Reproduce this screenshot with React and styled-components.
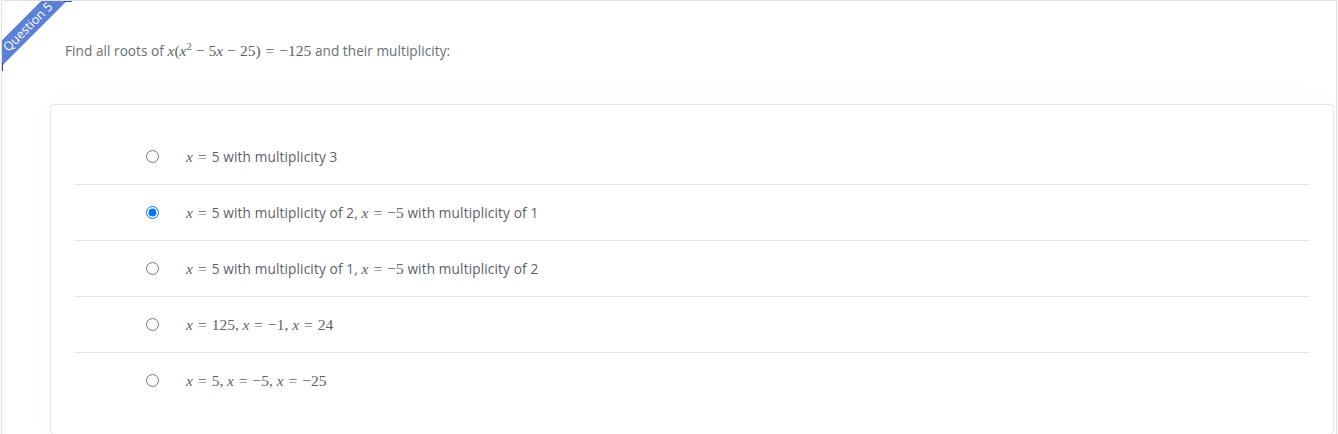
import styled, { createGlobalStyle } from "styled-components"

const GlobalStyle = createGlobalStyle`
  html, body {
    margin: 0;
    padding: 0;
    background: #ffffff;
  }
  body {
    font-family: "Open Sans", "Noto Sans", sans-serif;
  }
`

const StyledCard = styled.div`
  position: relative;
  margin-left: 1px;
  width: 1336px;
  height: 440px;
  box-sizing: border-box;
  border: 1px solid #dfe1e6;
  border-bottom: none;
  padding: 35px 2px 0 48px;
  overflow: hidden;
  background: #ffffff;
`

const StyledRibbon = styled.div`
  position: absolute;
  left: -29px;
  top: 17px;
  width: 110px;
  height: 18px;
  line-height: 18px;
  background: #5b80d6;
  color: #ffffff;
  font-size: 12.5px;
  text-align: center;
  transform: rotate(-45deg);
  z-index: 2;
`

const StyledFold = styled.div`
  position: absolute;
  background: #2e4d9c;
  z-index: 3;
  ${({ $side }) =>
    $side === "left"
      ? "left: -1px; top: 62px; width: 2px; height: 8px;"
      : "left: 62px; top: -1px; width: 8px; height: 2px;"}
`

const StyledQuestion = styled.div`
  padding-left: 15px;
  font-size: 13.6px;
  line-height: 22px;
  color: #6b6e73;
  letter-spacing: 0.05px;
`

const StyledAnswers = styled.div`
  margin-top: 42px;
  border: 1px solid #e3e4e8;
  border-radius: 4px;
  padding: 23px 24px 26px;
  box-shadow: 0 0 40px rgba(0, 0, 0, 0.025);
  background: #ffffff;
`

const StyledRow = styled.label`
  display: flex;
  align-items: center;
  height: 56px;
  box-sizing: border-box;
  padding-left: 71px;
  border-top: ${({ $first }) => ($first ? "none" : "1px solid #e4e5e9")};
  font-size: 13.6px;
  letter-spacing: 0.15px;
  color: #5e6166;

  input {
    margin: 0;
    width: 13px;
    height: 13px;
  }
`

const StyledLabelText = styled.span`
  margin-left: 27px;
`

const StyledMath = styled.span`
  font-family: "Liberation Serif", "DejaVu Serif", serif;
  font-size: 15.5px;
  letter-spacing: 0;
  color: #5e6166;
`

const StyledVar = styled.i`
  font-family: "Liberation Serif", "DejaVu Serif", serif;
  font-style: italic;
`

const StyledSup = styled.sup`
  font-size: 10.5px;
`

const StyledOp = styled.span`
  margin: 0 ${({ $wide }) => ($wide ? "5px" : "4px")};
`

const Eq = ({ value }) => (
  <StyledMath>
    <StyledVar>x</StyledVar>
    <StyledOp $wide>=</StyledOp>
    {value}
  </StyledMath>
)

const options = [
  {
    checked: false,
    content: (
      <>
        <Eq value="" />5 with multiplicity 3
      </>
    ),
  },
  {
    checked: true,
    content: (
      <>
        <Eq value="" />5 with multiplicity of 2, <Eq value="−5" /> with multiplicity of 1
      </>
    ),
  },
  {
    checked: false,
    content: (
      <>
        <Eq value="" />5 with multiplicity of 1, <Eq value="−5" /> with multiplicity of 2
      </>
    ),
  },
  {
    checked: false,
    content: (
      <>
        <Eq value="125," /> <Eq value="−1," /> <Eq value="24" />
      </>
    ),
  },
  {
    checked: false,
    content: (
      <>
        <Eq value="5," /> <Eq value="−5," /> <Eq value="−25" />
      </>
    ),
  },
]

const App = () => (
  <>
    <GlobalStyle />
    <StyledCard>
      <StyledRibbon>Question 5</StyledRibbon>
      <StyledFold $side="left" />
      <StyledFold $side="top" />
      <StyledQuestion>
        Find all roots of{" "}
        <StyledMath>
          <StyledVar>x</StyledVar>(<StyledVar>x</StyledVar>
          <StyledSup>2</StyledSup>
          <StyledOp>−</StyledOp>5<StyledVar>x</StyledVar>
          <StyledOp>−</StyledOp>25)
          <StyledOp $wide>=</StyledOp>−125
        </StyledMath>{" "}
        and their multiplicity:
      </StyledQuestion>
      <StyledAnswers>
        {options.map((option, index) => (
          <StyledRow key={index} $first={index === 0}>
            <input type="radio" name="q5" defaultChecked={option.checked} />
            <StyledLabelText>{option.content}</StyledLabelText>
          </StyledRow>
        ))}
      </StyledAnswers>
    </StyledCard>
  </>
)

export default App
